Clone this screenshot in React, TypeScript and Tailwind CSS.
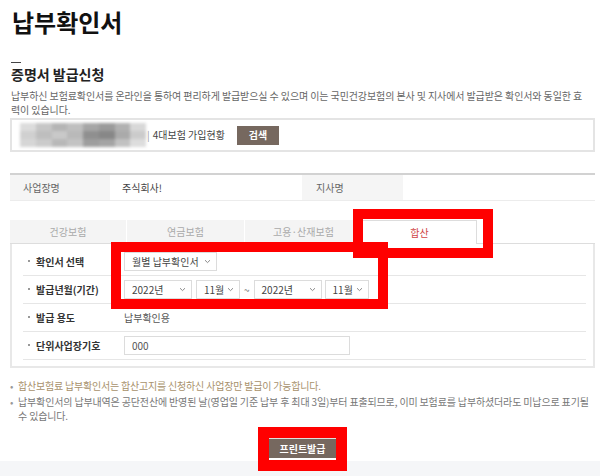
import React from "react";

const mosaic: string[] = [
  "bg-[#dcdcdc]", "bg-[#c6c6c6]", "bg-[#b5b5b5]", "bg-[#bfbfbf]", "bg-[#a6a6a6]", "bg-[#9b9b9b]", "bg-[#b1b1b1]", "bg-[#d8d8d8]",
  "bg-[#d0d0d0]", "bg-[#bebebe]", "bg-[#c9c9c9]", "bg-[#b9b9b9]", "bg-[#8f8f8f]", "bg-[#878787]", "bg-[#aaaaaa]", "bg-[#cbcbcb]",
  "bg-[#d6d6d6]", "bg-[#cbcbcb]", "bg-[#b8b8b8]", "bg-[#c3c3c3]", "bg-[#9e9e9e]", "bg-[#a4a4a4]", "bg-[#c1c1c1]", "bg-[#dddddd]",
];

function Chevron() {
  return (
    <svg width="7" height="5" viewBox="0 0 7 5" className="shrink-0">
      <path d="M1 1.2 L3.5 3.6 L6 1.2" fill="none" stroke="#8a8a8a" strokeWidth="1" />
    </svg>
  );
}

function Select({ w, label }: { w: string; label: string }) {
  return (
    <div className={`${w} h-[19px] border border-[#dcdcdc] bg-white flex items-center justify-between pl-[7px] pr-[5px] text-[10px] text-[#444] leading-none`}>
      <span className="whitespace-nowrap">{label}</span>
      <Chevron />
    </div>
  );
}

function Row({ label, children }: { label: string; children: React.ReactNode }) {
  return (
    <div className="h-[28px] border-b border-[#e6e6e6] flex items-center">
      <div className="w-[101px] flex items-center pl-[5px] text-[10px] font-bold text-[#333] leading-none whitespace-nowrap">
        <span className="w-[2px] h-[2px] bg-[#777] rounded-full mr-[6px] -translate-y-[1px]" />
        {label}
      </div>
      <div className="flex-1 flex items-center">{children}</div>
    </div>
  );
}

export default function App() {
  return (
    <div className="relative w-[600px] h-[476px] overflow-hidden bg-white font-['Noto_Sans_CJK_KR','Noto_Sans',sans-serif]">
      <div className="pl-[10px] pr-[5px]">
        {/* Title */}
        <div className="pt-[8px] text-[24px] leading-[28px] font-bold text-[#111] pl-[2px]">납부확인서</div>

        {/* Section header */}
        <div className="mt-[26px] ml-[1px] w-[10px] h-[1px] bg-[#444]" />
        <div className="mt-[3px] text-[14px] leading-[16px] font-bold text-[#222] pl-[1px]">증명서 발급신청</div>
        <p className="mt-[7px] text-[10px] leading-[14px] tracking-[-0.1px] text-[#666] pl-[1px] whitespace-nowrap">
          납부하신 보험료확인서를 온라인을 통하여 편리하게 발급받으실 수 있으며 이는 국민건강보험의 본사 및 지사에서 발급받은 확인서와 동일한 효
          <br />
          력이 있습니다.
        </p>

        {/* Search box */}
        <div className="mt-[1px] h-[34px] border-2 border-[#e4e4e4] flex items-center pl-[8px]">
          <div className="w-[126px] h-[25px] grid grid-cols-8 grid-rows-3 blur-[1.5px]">
            {mosaic.map((c, i) => (
              <div key={i} className={c} />
            ))}
          </div>
          <div className="ml-[1px] text-[10px] text-[#444] leading-none whitespace-nowrap">
            <span className="text-[#999] mr-[3px]">|</span>4대보험 가입현황
          </div>
          <div className="ml-[12px] w-[42px] h-[19px] bg-[#76685f] flex items-center justify-center text-white text-[10px] font-bold leading-none">
            검색
          </div>
        </div>

        {/* Info table */}
        <div className="mt-[21px] border-t-2 border-[#d2d2d2] border-b border-b-[#ececec] h-[28px] flex text-[10px] leading-none">
          <div className="w-[100px] bg-[#f5f5f5] flex items-center pl-[13px] text-[#666]">사업장명</div>
          <div className="w-[192px] flex items-center pl-[12px] text-[#444]">주식회사!</div>
          <div className="w-[101px] bg-[#f5f5f5] flex items-center pl-[14px] text-[#666]">지사명</div>
          <div className="flex-1" />
        </div>

        {/* Tabs */}
        <div className="mt-[19px] flex h-[24px] text-[10px] leading-none">
          <div className="w-[117px] bg-[#f4f4f4] border-r border-white border-b border-b-[#dddddd] flex items-center justify-center text-[#aaa]">건강보험</div>
          <div className="w-[118px] bg-[#f4f4f4] border-r border-white border-b border-b-[#dddddd] flex items-center justify-center text-[#aaa]">연금보험</div>
          <div className="w-[117px] bg-[#f4f4f4] border-b border-b-[#dddddd] flex items-center justify-center text-[#aaa]">고용·산재보험</div>
          <div className="w-[115px] bg-white border-t border-x border-[#dddddd] flex items-center justify-center text-[#d04545]">합산</div>
          <div className="flex-1 border-b border-[#dddddd]" />
        </div>

        {/* Form box */}
        <div className="border-2 border-t-0 border-[#e8e8e8] pt-[4px] pb-[6px] pl-[11px] pr-[7px]">
          <Row label="확인서 선택">
            <Select w="w-[93px]" label="월별 납부확인서" />
          </Row>
          <Row label="발급년월(기간)">
            <div className="flex items-center">
              <Select w="w-[68px]" label="2022년" />
              <div className="ml-[4px]">
                <Select w="w-[44px]" label="11월" />
              </div>
              <span className="mx-[4px] text-[10px] text-[#777] leading-none">~</span>
              <Select w="w-[68px]" label="2022년" />
              <div className="ml-[3px]">
                <Select w="w-[44px]" label="11월" />
              </div>
            </div>
          </Row>
          <Row label="발급 용도">
            <span className="text-[10px] text-[#555] leading-none">납부확인용</span>
          </Row>
          <Row label="단위사업장기호">
            <div className="w-[226px] h-[19px] border border-[#dcdcdc] flex items-center pl-[7px] text-[10px] text-[#555] leading-none">000</div>
          </Row>
        </div>

        {/* Notes */}
        <div className="mt-[11px] flex text-[10px] leading-[14px] tracking-[-0.2px] text-[#a8916b]">
          <span className="w-[8px] shrink-0 text-[#999]">•</span>
          <span className="whitespace-nowrap">합산보험료 납부확인서는 합산고지를 신청하신 사업장만 발급이 가능합니다.</span>
        </div>
        <div className="mt-[2px] flex text-[10px] leading-[14px] tracking-[-0.15px] text-[#777]">
          <span className="w-[8px] shrink-0 text-[#999]">•</span>
          <p className="whitespace-nowrap">
            납부확인서의 납부내역은 공단전산에 반영된 날(영업일 기준 납부 후 최대 3일)부터 표출되므로, 이미 보험료를 납부하셨더라도 미납으로 표기될
            <br />
            수 있습니다.
          </p>
        </div>

        {/* Print button */}
        <div className="mt-[14px] flex justify-center">
          <div className="w-[68px] h-[21px] bg-[#76685f] border-t-2 border-[#e2dedb] flex items-center justify-center text-white text-[10px] font-bold leading-none">
            프린트발급
          </div>
        </div>
      </div>

      {/* bottom band */}
      <div className="mt-[3px] h-[20px] bg-[#f5f6f8]" />

      {/* Red annotation boxes */}
      <div className="absolute left-[353px] top-[209px] w-[140px] h-[49px] border-[10px] border-[#ff0000]" />
      <div className="absolute left-[111px] top-[242px] w-[277px] h-[67px] border-[10px] border-[#ff0000]" />
      <div className="absolute left-[258px] top-[427px] w-[89px] h-[44px] border-[11px] border-[#ff0000]" />
    </div>
  );
}
